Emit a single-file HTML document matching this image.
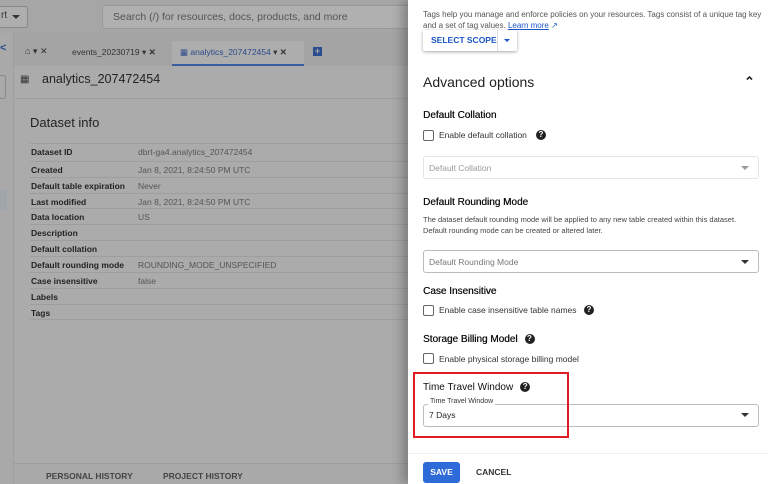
<!DOCTYPE html>
<html><head><style>
*{box-sizing:border-box;margin:0;padding:0}
body{width:768px;height:484px;overflow:hidden;font-family:"Liberation Sans",sans-serif;position:relative;background:#fff}
.l{position:absolute;left:0;top:0;width:408px;height:484px;background:#ababab;overflow:hidden}
.a{position:absolute;white-space:nowrap}
.r{position:absolute;left:408px;top:0;width:360px;height:484px;background:#fff;box-shadow:-6px 0 10px rgba(0,0,0,.25)}
.cb{position:absolute;width:11px;height:11px;border:1.5px solid #666;border-radius:2px}
.q{position:absolute;width:10px;height:10px;border-radius:50%;background:#222;color:#fff;font-size:8px;font-weight:bold;text-align:center;line-height:10px}
.qi{display:inline-block;vertical-align:middle;margin-left:7px;width:10px;height:10px;border-radius:50%;background:#222;color:#fff;font-size:8px;font-weight:bold;text-align:center;line-height:10px;text-shadow:none}
.h{font-size:10px;color:#111;text-shadow:0.3px 0 0 #111}
.t{font-size:8.5px;color:#333}
.sel{position:absolute;left:423px;width:336px;height:23px;border:1px solid #ccc;border-radius:3px}
.tri{position:absolute;width:0;height:0;border-left:4px solid transparent;border-right:4px solid transparent;border-top:4px solid #333}
.row{position:absolute;left:30px;width:378px;border-top:1px solid #9e9e9e;height:16px;font-size:8.5px}
.row b{position:absolute;left:1px;top:3px;color:#222;font-weight:bold}
.row span{position:absolute;left:108px;top:3px;color:#555}
</style></head><body>
<div class="l">
 <div class="a" style="left:0;top:0;width:408px;height:33px;background:#a6a6a6"></div>
 <div class="a" style="left:-6px;top:6px;width:34px;height:22px;border:1px solid #888;border-radius:3px;background:#aeaeae"></div>
 <div class="a" style="left:1px;top:10px;font-size:10px;color:#333">rt</div>
 <div class="tri" style="left:12px;top:15px;border-top-color:#333"></div>
 <div class="a" style="left:102px;top:5px;width:320px;height:24px;border:1px solid #999;border-radius:3px;background:#b0b0b0"></div>
 <div class="a" style="left:113px;top:11px;font-size:10.5px;color:#555">Search (/) for resources, docs, products, and more</div>
 <div class="a" style="left:0;top:33px;width:14px;height:451px;background:#a9a9a9;border-right:1px solid #9e9e9e"></div>
 <div class="a" style="left:0;top:42px;font-size:11px;color:#2a4e90;font-weight:bold">&lt;</div>
 <div class="a" style="left:-5px;top:75px;width:11px;height:24px;border:1px solid #888;border-radius:3px"></div>
 <div class="a" style="left:0;top:190px;width:7px;height:20px;background:#a0a4ab"></div>
 <div class="a" style="left:14px;top:33px;width:394px;height:33px;background:#a4a4a4"></div>
 <div class="a" style="left:25px;top:46px;font-size:9px;color:#333">⌂ ▾ ✕</div>
 <div class="a" style="left:72px;top:47px;font-size:8.5px;color:#333">events_20230719 ▾ <b>✕</b></div>
 <div class="a" style="left:172px;top:41px;width:132px;height:25px;background:#adadad;border-bottom:2px solid #3a5ea0"></div>
 <div class="a" style="left:180px;top:47px;font-size:8.5px;color:#2a4a8a">▦ analytics_207472454 <span style="color:#333">▾ <b>✕</b></span></div>
 <div class="a" style="left:313px;top:47px;width:9px;height:9px;background:#2a4e90;color:#aaa;font-size:9px;line-height:9px;text-align:center;font-weight:bold">+</div>
 <div class="a" style="left:20px;top:74px;font-size:10px;color:#333">▦</div>
 <div class="a" style="left:42px;top:72px;font-size:12.5px;color:#222">analytics_207472454</div>
 <div class="a" style="left:14px;top:98px;width:394px;border-top:1px solid #9e9e9e"></div>
 <div class="a" style="left:30px;top:115px;font-size:13px;color:#222">Dataset info</div>
 <div class="row" style="top:143px"><b>Dataset ID</b><span>dbrt-ga4.analytics_207472454</span></div>
 <div class="row" style="top:161px"><b>Created</b><span>Jan 8, 2021, 8:24:50 PM UTC</span></div>
 <div class="row" style="top:177px"><b>Default table expiration</b><span>Never</span></div>
 <div class="row" style="top:193px"><b>Last modified</b><span>Jan 8, 2021, 8:24:50 PM UTC</span></div>
 <div class="row" style="top:208px"><b>Data location</b><span>US</span></div>
 <div class="row" style="top:224px"><b>Description</b></div>
 <div class="row" style="top:240px"><b>Default collation</b></div>
 <div class="row" style="top:256px"><b>Default rounding mode</b><span>ROUNDING_MODE_UNSPECIFIED</span></div>
 <div class="row" style="top:272px"><b>Case insensitive</b><span>false</span></div>
 <div class="row" style="top:288px"><b>Labels</b></div>
 <div class="row" style="top:304px"><b>Tags</b></div>
 <div class="a" style="left:30px;top:319px;width:378px;border-top:1px solid #9e9e9e"></div>
 <div class="a" style="left:14px;top:463px;width:394px;height:21px;border-top:1px solid #9e9e9e;background:#a9a9a9"></div>
 <div class="a" style="left:46px;top:471px;font-size:8.5px;color:#444;font-weight:bold">PERSONAL HISTORY</div>
 <div class="a" style="left:163px;top:471px;font-size:8.5px;color:#444;font-weight:bold">PROJECT HISTORY</div>
</div>
<div class="r"></div>
<div class="a" style="left:423px;top:10px;font-size:8px;color:#555;line-height:10.5px;white-space:normal;width:340px">Tags help you manage and enforce policies on your resources. Tags consist of a unique tag key and a set of tag values. <span style="color:#1a56c8;text-decoration:underline">Learn more</span> <span style="color:#1a56c8">↗</span></div>
<div class="a" style="left:423px;top:30px;width:94px;height:21px;box-shadow:0 1px 3px rgba(0,0,0,.35);border-radius:2px;background:#fff"></div>
<div class="a" style="left:497px;top:30px;height:21px;border-left:1px solid #ddd"></div>
<div class="a" style="left:431px;top:35px;font-size:8.5px;color:#1a56c8;font-weight:bold">SELECT SCOPE</div>
<div class="tri" style="left:504px;top:39px;border-left-width:3px;border-right-width:3px;border-top:3px solid #1a56c8"></div>
<div class="a" style="left:423px;top:74px;font-size:14px;color:#222">Advanced options</div>
<div class="a" style="left:744px;top:74px;font-size:13px;color:#222;font-weight:bold">⌃</div>
<div class="a h" style="left:423px;top:110px">Default Collation</div>
<div class="cb" style="left:423px;top:130px"></div>
<div class="a t" style="left:439px;top:130px">Enable default collation</div>
<div class="q" style="left:536px;top:130px">?</div>
<div class="sel" style="top:156px;border-color:#e4e4e4"></div>
<div class="a" style="left:429px;top:163px;font-size:8.5px;color:#999">Default Collation</div>
<div class="tri" style="left:741px;top:166px;border-top-color:#999"></div>
<div class="a h" style="left:423px;top:197px">Default Rounding Mode</div>
<div class="a" style="left:423px;top:215px;font-size:7.5px;color:#444;line-height:10.5px">The dataset default rounding mode will be applied to any new table created within this dataset.<br>Default rounding mode can be created or altered later.</div>
<div class="sel" style="top:250px;border-color:#bbb"></div>
<div class="a" style="left:429px;top:257px;font-size:8.5px;color:#777">Default Rounding Mode</div>
<div class="tri" style="left:741px;top:260px"></div>
<div class="a h" style="left:423px;top:286px">Case Insensitive</div>
<div class="cb" style="left:423px;top:305px"></div>
<div class="a t" style="left:439px;top:305px">Enable case insensitive table names</div>
<div class="q" style="left:584px;top:305px">?</div>
<div class="a h" style="left:423px;top:334px">Storage Billing Model<span class="qi">?</span></div>
<div class="cb" style="left:423px;top:353px"></div>
<div class="a t" style="left:439px;top:354px">Enable physical storage billing model</div>
<div class="a" style="left:423px;top:382px;font-size:10px;color:#111">Time Travel Window<span class="qi">?</span></div>
<div class="sel" style="top:404px;border-color:#bbb"></div>
<div class="a" style="left:428px;top:398px;font-size:7px;color:#333;background:#fff;padding:0 2px">Time Travel Window</div>
<div class="a" style="left:429px;top:410px;font-size:8.5px;color:#222">7 Days</div>
<div class="tri" style="left:741px;top:413px"></div>
<div class="a" style="left:413px;top:372px;width:156px;height:66px;border:2px solid #e01b24"></div>
<div class="a" style="left:408px;top:453px;width:360px;border-top:1px solid #eee"></div>
<div class="a" style="left:423px;top:462px;width:37px;height:21px;background:#2f6bd8;border-radius:3px;color:#fff;font-size:8.5px;font-weight:bold;text-align:center;line-height:21px">SAVE</div>
<div class="a" style="left:476px;top:467px;font-size:8.5px;color:#333;font-weight:bold">CANCEL</div>
</body></html>
